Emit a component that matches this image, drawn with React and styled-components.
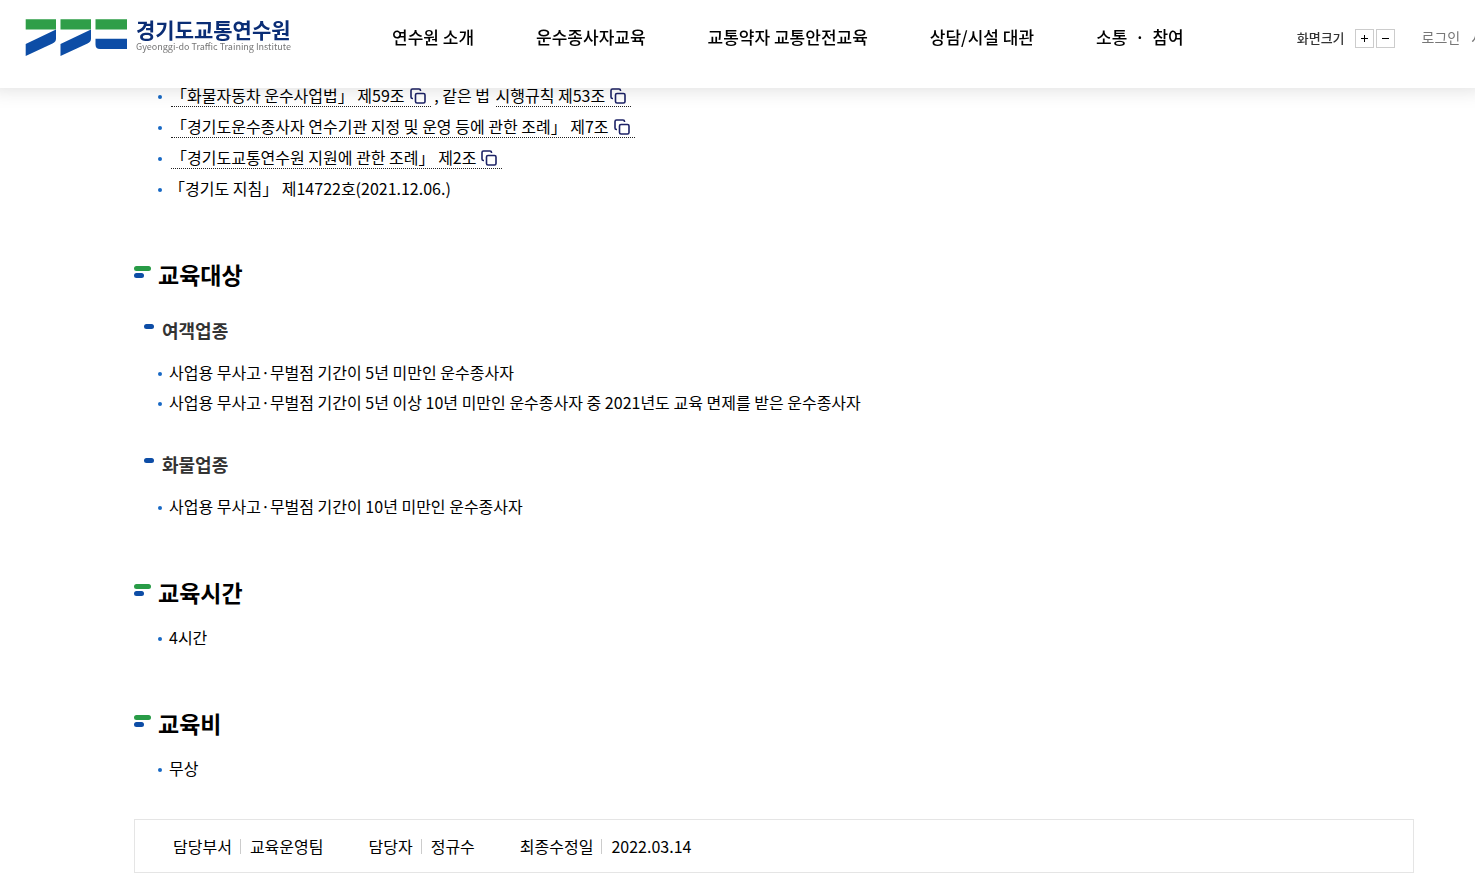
import React from 'react'
import styled, { createGlobalStyle } from 'styled-components'

const GlobalStyle = createGlobalStyle`
    * {
        box-sizing: border-box;
        margin: 0;
        padding: 0;
    }

    body {
        background: #fff;
        color: #000;
        font-family: "Noto Sans CJK KR", sans-serif;
        font-size: 16px;
        line-height: 30px;
    }

    ul {
        list-style: none;
    }

    a {
        color: inherit;
        text-decoration: none;
    }
`

const Header = styled.header`
    position: fixed;
    top: 0;
    left: 0;
    right: 0;
    z-index: 10;
    display: flex;
    align-items: flex-start;
    height: 88px;
    padding: 18px 0 0 25px;
    background: #fff;
    box-shadow: 0 -10px 20px 10px rgba(0, 0, 0, 0.15);
    white-space: nowrap;
    clip-path: inset(0 0 -30px 0);
`

const LogoLink = styled.a`
    display: flex;
    flex: none;
    gap: 9px;

    svg {
        flex: none;
    }
`

const LogoText = styled.span`
    display: flex;
    flex-direction: column;
`

const LogoName = styled.strong`
    color: #0a2d75;
    font-size: 21px;
    font-weight: 700;
    line-height: 22px;
`

const LogoSub = styled.span`
    color: #777;
    font-size: 9px;
    font-weight: 400;
    line-height: 14px;
`

const Nav = styled.nav`
    flex: none;
    margin-left: 101px;

    ul {
        display: flex;
        gap: 62px;
    }

    a {
        font-size: 17px;
        font-weight: 500;
        line-height: 38px;
        white-space: pre;
    }
`

const Util = styled.div`
    display: flex;
    flex: none;
    align-items: center;
    height: 40px;
    margin-left: 113px;
    font-size: 14px;
`

const SizeLabel = styled.span`
    margin-right: 10px;
    color: #333;
    font-size: 13px;
    font-weight: 500;
`

const SizeButton = styled.button`
    display: flex;
    align-items: center;
    justify-content: center;
    width: 19px;
    height: 19px;
    margin-right: 2px;
    border: 1px solid #ccc;
    background: #fff;
`

const UtilLink = styled.a`
    margin-left: ${(props) => (props.$first ? '25px' : '11px')};
    padding-bottom: 2px;
    color: #777;
`

const Content = styled.main`
    padding: 80px 61px 11px 134px;
`

const Section = styled.section`
    margin-bottom: 53px;
`

const Title = styled.h2`
    display: flex;
    gap: 7px;
    font-size: 23px;
    font-weight: 700;
    line-height: 36px;
    margin-bottom: ${(props) => (props.$wide ? '24px' : '12px')};

    svg {
        flex: none;
        margin-top: 10px;
    }
`

const SubSection = styled.div`
    padding-left: 10px;

    & + & {
        margin-top: 33px;
    }
`

const SubTitle = styled.h3`
    display: flex;
    gap: 8px;
    margin-bottom: 13px;
    color: #333;
    font-size: 18px;
    font-weight: 700;
    line-height: 28px;

    &::before {
        content: '';
        width: 10px;
        height: 5px;
        margin-top: 8px;
        border-radius: 3px;
        background: #0d4da6;
    }
`

const List = styled.ul`
    padding-left: ${(props) => (props.$nested ? '14px' : '24px')};
`

const Item = styled.li`
    display: flex;
    align-items: flex-start;
    min-height: ${(props) => (props.$law ? '31px' : '30px')};

    &::before {
        content: '';
        flex: none;
        width: 4px;
        height: 4px;
        margin: 15px 7px 0 0;
        border-radius: 50%;
        background: #1768c4;
    }
`

const LawLink = styled.a`
    display: inline-block;
    height: 27px;
    margin-left: 2px;
    padding-right: 5px;
    border-bottom: 1px dotted #222;

    svg {
        margin-left: 5px;
        vertical-align: -2px;
    }
`

const Manager = styled.dl`
    display: flex;
    flex-wrap: wrap;
    gap: 0 45px;
    margin-top: -17px;
    padding: 11px 38px;
    border: 1px solid #e5e5e5;

    div {
        display: flex;
        align-items: center;
    }

    dt {
        font-weight: 400;
    }

    dd {
        display: flex;
        align-items: center;
    }

    dd::before {
        content: '';
        width: 1px;
        height: 15px;
        margin: 0 9px 0 8px;
        background: #ccc;
    }
`

const LogoMark = () => (
    <svg width="102" height="39" viewBox="0 0 102 39" aria-hidden="true">
        <path fill="#2f9e48" d="M.7 1.3H31v10.2H.7zM35.5 1.3h30.5v10.2H35.5zM70.5 1.3H102v10.2H70.5z" />
        <path
            fill="#0d4da6"
            d="M.7 26L31 11.5v9c0 2.600-1 3.800-3.500 5L.7 38zM35.500 26L66 11.500v9c0 2.600-1 3.800-3.500 5L35.500 38zM70.500 20.700H102v10.300H75c-3 0-4.500-1.500-4.500-4.500z"
        />
    </svg>
)

const TitleMark = () => (
    <svg width="17" height="13" viewBox="0 0 17 13" aria-hidden="true">
        <rect width="17" height="5" rx="2.5" fill="#289b46" />
        <rect y="7" width="10" height="5" rx="2.5" fill="#0d4da6" />
    </svg>
)

const CopyIcon = () => (
    <svg width="16" height="16" viewBox="0 0 16 16" fill="none" stroke="#1c2266" strokeWidth="1.6" aria-hidden="true">
        <rect x="5.5" y="5.5" width="9.5" height="9.5" rx="1.5" />
        <path d="M3 10.5h-.5a1.5 1.5 0 0 1-1.5-1.5V2.5A1.5 1.5 0 0 1 2.5 1H9a1.5 1.5 0 0 1 1.5 1.5V3" />
    </svg>
)

const menus = ['연수원 소개', '운수종사자교육', '교통약자 교통안전교육', '상담/시설 대관', '소통  ·  참여']

const managerInfo = [
    ['담당부서', '교육운영팀'],
    ['담당자', '정규수'],
    ['최종수정일', '2022.03.14']
]

const Law = ({ children }) => (
    <LawLink href="#">{children}<CopyIcon /></LawLink>
)

const App = () => (
    <>
        <GlobalStyle />
        <Header>
            <LogoLink href="#">
                <LogoMark />
                <LogoText>
                    <LogoName>경기도교통연수원</LogoName>
                    <LogoSub>Gyeonggi-do Traffic Training Institute</LogoSub>
                </LogoText>
            </LogoLink>
            <Nav>
                <ul>
                    {menus.map((menu) => (
                        <li key={menu}><a href="#">{menu}</a></li>
                    ))}
                </ul>
            </Nav>
            <Util>
                <SizeLabel>화면크기</SizeLabel>
                <SizeButton type="button" aria-label="확대">
                    <svg width="7" height="7" viewBox="0 0 7 7"><path d="M0 3.5h7M3.5 0v7" stroke="#000" /></svg>
                </SizeButton>
                <SizeButton type="button" aria-label="축소">
                    <svg width="7" height="7" viewBox="0 0 7 7"><path d="M0 3.5h7" stroke="#000" /></svg>
                </SizeButton>
                <UtilLink href="#" $first>로그인</UtilLink>
                <UtilLink href="#">사이트맵</UtilLink>
            </Util>
        </Header>

        <Content>
            <Section>
                <List>
                    <Item $law>
                        <p><Law>「화물자동차 운수사업법」 제59조</Law> , 같은 법 <Law>시행규칙 제53조</Law></p>
                    </Item>
                    <Item $law>
                        <p><Law>「경기도운수종사자 연수기관 지정 및 운영 등에 관한 조례」 제7조</Law></p>
                    </Item>
                    <Item $law>
                        <p><Law>「경기도교통연수원 지원에 관한 조례」 제2조</Law></p>
                    </Item>
                    <Item>「경기도 지침」 제14722호(2021.12.06.)</Item>
                </List>
            </Section>

            <Section>
                <Title $wide><TitleMark />교육대상</Title>
                <SubSection>
                    <SubTitle>여객업종</SubTitle>
                    <List $nested>
                        <Item>사업용 무사고·무벌점 기간이 5년 미만인 운수종사자</Item>
                        <Item>사업용 무사고·무벌점 기간이 5년 이상 10년 미만인 운수종사자 중 2021년도 교육 면제를 받은 운수종사자</Item>
                    </List>
                </SubSection>
                <SubSection>
                    <SubTitle>화물업종</SubTitle>
                    <List $nested>
                        <Item>사업용 무사고·무벌점 기간이 10년 미만인 운수종사자</Item>
                    </List>
                </SubSection>
            </Section>

            <Section>
                <Title><TitleMark />교육시간</Title>
                <List>
                    <Item>4시간</Item>
                </List>
            </Section>

            <Section>
                <Title><TitleMark />교육비</Title>
                <List>
                    <Item>무상</Item>
                </List>
            </Section>

            <Manager>
                {managerInfo.map(([label, value]) => (
                    <div key={label}>
                        <dt>{label}</dt>
                        <dd>{value}</dd>
                    </div>
                ))}
            </Manager>
        </Content>
    </>
)

export default App
